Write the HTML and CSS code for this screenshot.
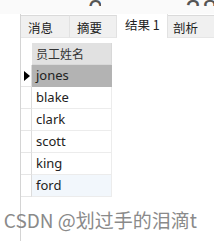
FILE: index.html
```html
<!DOCTYPE html>
<html lang="zh-CN">
<head>
    <meta charset="UTF-8">
    <meta name="viewport" content="width=device-width, initial-scale=1.0">
    <title>结果 1</title>
    <link rel="stylesheet" href="styles.css">
</head>
<body>
    <div class="top-strip">
        <span class="digit d0">0</span>
        <span class="digit d28">28</span>
    </div>

    <div class="panel">
        <div class="tabs">
            <div class="tab tab-msg">消息</div>
            <div class="tab tab-sum">摘要</div>
            <div class="tab tab-res active">结果 1</div>
            <div class="tab tab-pro">剖析</div>
        </div>

        <div class="grid">
            <div class="row head">
                <div class="mark"></div>
                <div class="cell">员工姓名</div>
            </div>
            <div class="row selected">
                <div class="mark"><span class="arrow"></span></div>
                <div class="cell">jones</div>
            </div>
            <div class="row">
                <div class="mark"></div>
                <div class="cell">blake</div>
            </div>
            <div class="row">
                <div class="mark"></div>
                <div class="cell">clark</div>
            </div>
            <div class="row">
                <div class="mark"></div>
                <div class="cell">scott</div>
            </div>
            <div class="row">
                <div class="mark"></div>
                <div class="cell">king</div>
            </div>
            <div class="row hover">
                <div class="mark"></div>
                <div class="cell">ford</div>
            </div>
        </div>
    </div>

    <div class="watermark">CSDN @划过手的泪滴t</div>
</body>
</html>
```

FILE: styles.css
```css
body {
    margin: 0;
    width: 214px;
    height: 241px;
    overflow: hidden;
    position: relative;
    background: #fff;
    font-family: "Noto Sans", "Noto Sans CJK SC", sans-serif;
    color: #222;
}
.top-strip {
    height: 14px;
    overflow: hidden;
    background: #fafafa;
    display: flex;
}
.top-strip .digit {
    font-family: "Liberation Sans", sans-serif;
    font-size: 27px;
    line-height: 27px;
    color: #555;
    height: 9px;
    overflow: hidden;
    display: block;
    margin-top: -3px;
}
.top-strip .d0 {
    margin-left: 88px;
}
.top-strip .d28 {
    margin-left: 85px;
    letter-spacing: 2px;
}
.panel {
    margin-left: 20px;
    border-left: 1px solid #d4d4d4;
    height: 227px;
}
.tabs {
    display: flex;
    align-items: flex-end;
    height: 24px;
}
.tab {
    height: 23px;
    line-height: 24px;
    box-sizing: border-box;
    font-family: "Noto Sans CJK SC", sans-serif;
    font-size: 12.5px;
    color: #222;
    background: #f0f0f0;
    border-top: 1px solid #dadada;
    border-right: 1px solid #e2e2e2;
    border-bottom: 1px solid #e6e6e6;
}
.tab-msg {
    width: 49px;
    padding-left: 7px;
}
.tab-sum {
    width: 47px;
    padding-left: 7px;
}
.tab-res {
    width: 51px;
    padding-left: 8px;
}
.tab-pro {
    flex: 1;
    padding-left: 5px;
    border-right: none;
}
.tab.active {
    height: 24px;
    line-height: 22px;
    background: #fff;
    border-top: none;
    border-bottom: none;
}
.grid {
    margin-top: 5px;
    width: 91px;
}
.row {
    display: flex;
    height: 22px;
}
.mark {
    width: 11px;
    box-sizing: border-box;
    border-right: 1px solid #dcdcdc;
    border-bottom: 1px solid #e6e6e6;
    display: flex;
    align-items: center;
    padding-left: 3px;
}
.arrow {
    width: 0;
    height: 0;
    border-left: 6px solid #000;
    border-top: 5px solid transparent;
    border-bottom: 5px solid transparent;
}
.cell {
    flex: 1;
    box-sizing: border-box;
    padding-left: 4px;
    font-size: 13px;
    line-height: 21px;
    border-bottom: 1px solid #ececec;
    border-right: 1px solid #ececec;
}
.head .mark {
    border-bottom: none;
    border-right: none;
}
.head .cell {
    background: #e1e1e1;
    font-family: "Noto Sans CJK SC", sans-serif;
    font-size: 12px;
    color: #333;
    border-color: #d8d8d8;
}
.selected .cell {
    background: #b3b3b3;
    border-color: #b3b3b3;
}
.hover .cell {
    background: #f2f7fc;
}
.watermark {
    position: absolute;
    right: 17px;
    top: 208px;
    font-family: "Noto Sans CJK SC", sans-serif;
    font-size: 19px;
    line-height: 24px;
    color: #8a8a8a;
    white-space: nowrap;
}
```
